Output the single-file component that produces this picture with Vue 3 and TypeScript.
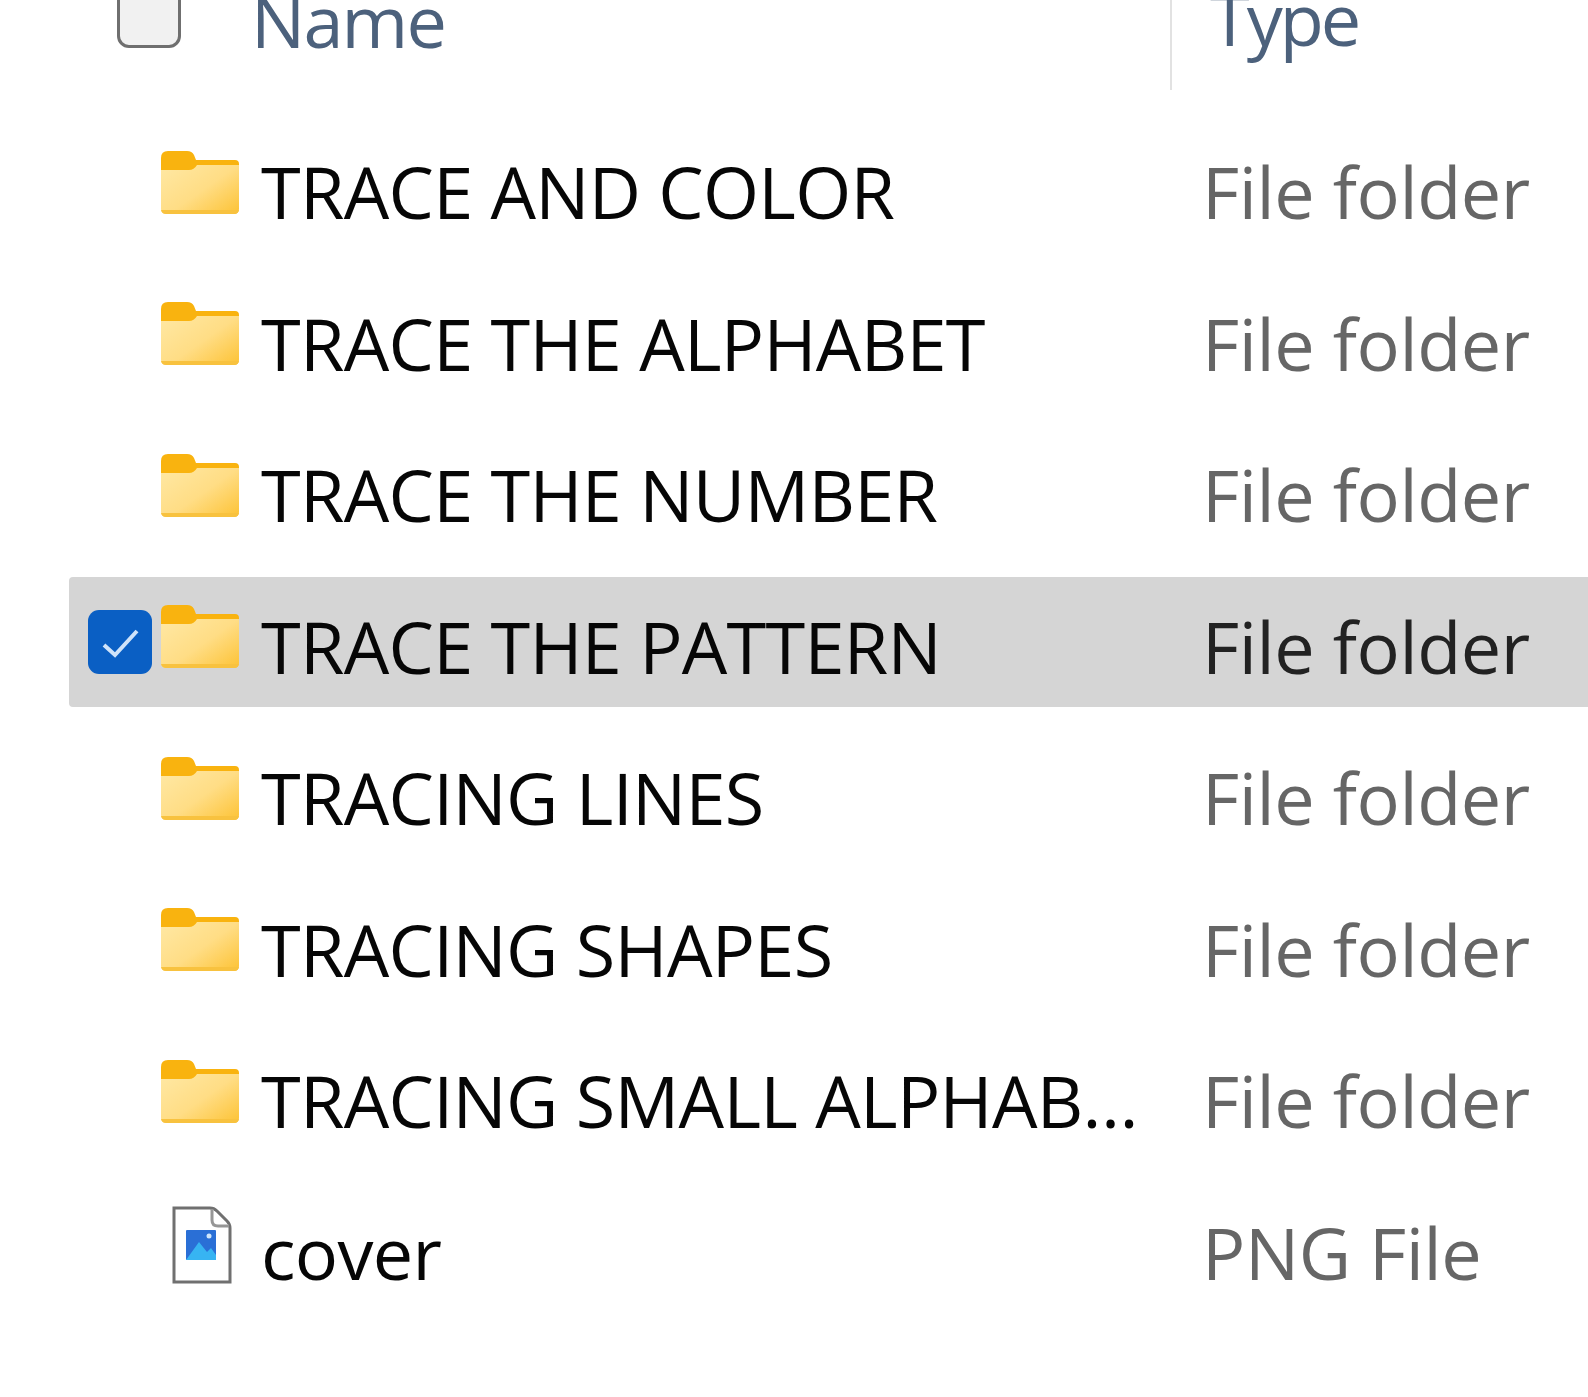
<template>
  <div class="explorer">
    <div class="header">
      <span class="head-check"></span>
      <span class="head-name">Name</span>
      <span class="divider"></span>
      <span class="head-type">Type</span>
    </div>
    <ul class="list">
      <li v-for="(item, i) in items" :key="item.name" class="row" :class="{ selected: item.selected }">
        <span class="check-cell">
          <span v-if="item.selected" class="check">
            <svg viewBox="0 0 64 64" width="64" height="64">
              <path d="M16 35 L27 45 L49 21" fill="none" stroke="#cfe3fa" stroke-width="4" />
            </svg>
          </span>
        </span>
        <span class="icon-cell">
          <svg v-if="item.kind === 'folder'" class="folder" viewBox="0 0 78 63" width="78" height="63">
            <defs>
              <linearGradient :id="'body' + i" x1="0" y1="0" x2="1" y2="0.9">
                <stop offset="0" stop-color="#ffe8a4" />
                <stop offset="0.55" stop-color="#ffdd85" />
                <stop offset="1" stop-color="#fdc53c" />
              </linearGradient>
            </defs>
            <path d="M0 7 Q0 0 7 0 H26 Q31 0 33 4 L35 9 H74 Q78 9 78 13 V24 H0 Z" fill="#f9b30f" />
            <path d="M0 19 H28 Q33 19 36 14 H78 V58 Q78 63 73 63 H5 Q0 63 0 58 Z" :fill="'url(#body' + i + ')'" />
            <path d="M0 59 H78 Q77 63 73 63 H5 Q1 63 0 59 Z" fill="#f8c23f" />
          </svg>
          <svg v-else class="file" viewBox="0 0 60 78" width="60" height="78">
            <path d="M2 2 H38 Q42 2 45 5 L55 15 Q58 18 58 22 V76 H2 Z" fill="#fff" stroke="#707070" stroke-width="3" />
            <path d="M40 3 V14 Q40 20 46 20 H57" fill="#fff" stroke="#969696" stroke-width="3" />
            <rect x="14" y="24" width="30" height="30" rx="1" fill="#2a6fd6" />
            <path d="M14 54 L27 36 L35 46 L39 42 L44 49 V54 Z" fill="#37b4f2" />
            <circle cx="37" cy="30" r="2.5" fill="#cfe6fb" />
          </svg>
        </span>
        <span class="name">{{ item.name }}</span>
        <span class="type">{{ item.type }}</span>
      </li>
    </ul>
  </div>
</template>

<script setup lang="ts">
interface Item {
  name: string
  type: string
  kind: 'folder' | 'file'
  selected?: boolean
}

const items: Item[] = [
  { name: 'TRACE AND COLOR', type: 'File folder', kind: 'folder' },
  { name: 'TRACE THE ALPHABET', type: 'File folder', kind: 'folder' },
  { name: 'TRACE THE NUMBER', type: 'File folder', kind: 'folder' },
  { name: 'TRACE THE PATTERN', type: 'File folder', kind: 'folder', selected: true },
  { name: 'TRACING LINES', type: 'File folder', kind: 'folder' },
  { name: 'TRACING SHAPES', type: 'File folder', kind: 'folder' },
  { name: 'TRACING SMALL ALPHABET', type: 'File folder', kind: 'folder' },
  { name: 'cover', type: 'PNG File', kind: 'file' }
]
</script>

<style scoped>
.explorer {
  width: 1588px;
  height: 1397px;
  overflow: hidden;
  background: #fff;
  font-family: "Open Sans", "Noto Sans", sans-serif;
  font-size: 72px;
  color: #060606;
  filter: blur(0.5px);
}
.header {
  height: 122px;
  display: flex;
  align-items: flex-start;
  margin-top: -42px;
  padding-left: 117px;
}
.head-check {
  width: 64px;
  height: 90px;
  box-sizing: border-box;
  border: 3px solid #6f6f6f;
  border-radius: 12px;
  background: #f1f1f1;
  flex: none;
}
.head-name {
  margin-left: 70px;
  padding-top: 17px;
  width: 919px;
  line-height: 90px;
  letter-spacing: -1.8px;
  color: #4c617c;
  flex: none;
}
.divider {
  width: 2px;
  height: 132px;
  background: #e2e2e2;
  flex: none;
}
.head-type {
  margin-left: 38px;
  padding-top: 15px;
  line-height: 90px;
  letter-spacing: -3px;
  color: #4c617c;
}
.list {
  list-style: none;
  margin: 42px 0 0;
  padding: 0 0 0 69px;
  display: flex;
  flex-direction: column;
  gap: 21.5px;
}
.row {
  height: 130px;
  display: flex;
  align-items: center;
  border-radius: 4px 0 0 4px;
}
.selected {
  background: #d5d5d5;
}
.check-cell {
  width: 92px;
  padding-left: 19px;
  box-sizing: border-box;
  flex: none;
  display: flex;
}
.check {
  width: 64px;
  height: 64px;
  border-radius: 11px;
  background: #0a5fc4;
  display: block;
}
.check svg {
  display: block;
}
.icon-cell {
  width: 100px;
  flex: none;
  display: flex;
  margin-top: -10px;
}
.file {
  margin-left: 11px;
  margin-top: 4px;
}
.name {
  width: 884px;
  margin-right: 57px;
  flex: none;
  line-height: 130px;
  margin-top: 8px;
  letter-spacing: -0.7px;
  white-space: nowrap;
  overflow: hidden;
  text-overflow: ellipsis;
}
.type {
  line-height: 130px;
  margin-top: 8px;
  letter-spacing: -0.4px;
  white-space: nowrap;
  color: #666;
}
.selected .type {
  color: #222;
}
</style>

<style>
html, body {
  margin: 0;
  overflow: hidden;
  background: #fff;
}
</style>
